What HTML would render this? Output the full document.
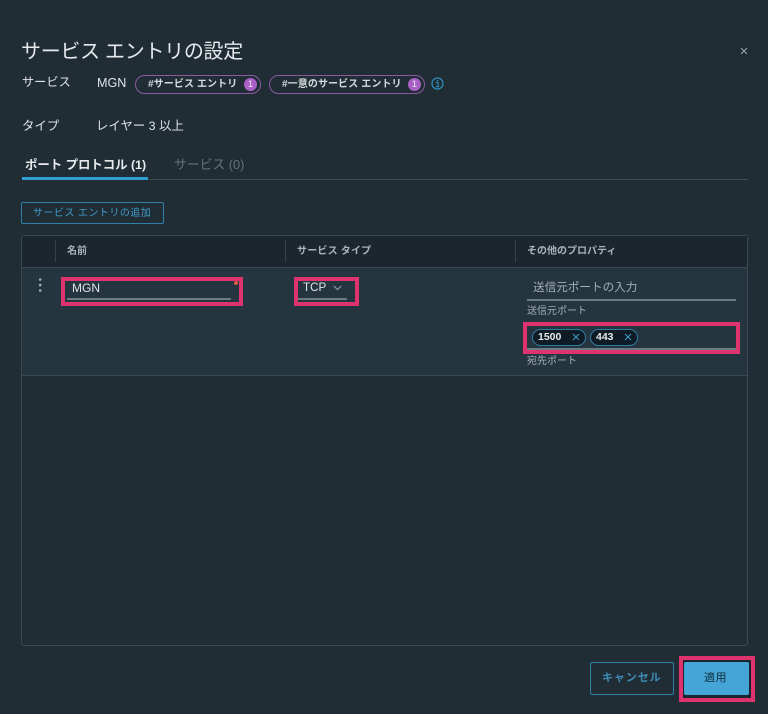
<!DOCTYPE html>
<html lang="ja">
<head>
<meta charset="utf-8">
<style>
html,body{margin:0;padding:0;background:#202d35;}
body{width:768px;height:714px;position:relative;overflow:hidden;font-family:"Liberation Sans","Noto Sans CJK JP",sans-serif;color:#dfe4e7;}
.a{position:absolute;white-space:nowrap;}
.t{line-height:1;}
.pill{position:absolute;top:75px;height:17px;border:1px solid #8b5aa0;border-radius:10px;box-sizing:content-box;}
.pill span.l{position:absolute;top:3px;font-size:10px;line-height:11px;font-weight:bold;color:#d5dadd;white-space:nowrap;letter-spacing:.1px;}
.pill span.n{position:absolute;top:2px;width:13px;height:13px;border-radius:50%;background:#a860c5;color:#f1e8f5;font-size:9px;line-height:13px;text-align:center;}
.sep{position:absolute;width:1px;background:#36444d;top:240px;height:22px;}
.pink{position:absolute;border:4px solid #df3370;box-sizing:border-box;}
.chip{position:absolute;top:329px;height:15px;border:1px solid #2f7ba3;border-radius:9px;background:#101c25;font-size:10.5px;font-weight:bold;line-height:14px;color:#e6eaec;}
</style>
</head>
<body>
<div class="a t" style="left:21px;top:42px;font-size:20px;letter-spacing:-.3px;color:#e6eaec;">サービス エントリの設定</div>
<svg class="a" style="left:740px;top:47px" width="8" height="8" viewBox="0 0 8 8"><path d="M1 1L7 7M7 1L1 7" stroke="#93a1a9" stroke-width="1.1" fill="none"/></svg>

<div class="a t" style="left:22px;top:76px;font-size:12.2px;">サービス</div>
<div class="a t" style="left:97px;top:77px;font-size:12.6px;">MGN</div>
<div class="pill" style="left:135px;width:124px;"><span class="l" style="left:12px;">#サービス エントリ</span><span class="n" style="left:108px;">1</span></div>
<div class="pill" style="left:269px;width:154px;"><span class="l" style="left:12px;">#一意のサービス エントリ</span><span class="n" style="left:138px;">1</span></div>
<svg class="a" style="left:431px;top:77px" width="13" height="13" viewBox="0 0 13 13"><circle cx="6.5" cy="6.5" r="5.5" stroke="#2d8fbd" stroke-width="1.2" fill="none"/><path d="M5 5.6H7V9.6M4.8 9.7H8.2" stroke="#2d8fbd" stroke-width="1.1" fill="none"/><rect x="5.8" y="3" width="1.4" height="1.4" fill="#2d8fbd"/></svg>

<div class="a t" style="left:22px;top:120px;font-size:12.4px;">タイプ</div>
<div class="a t" style="left:96px;top:120px;font-size:12.4px;">レイヤー 3 以上</div>

<div class="a t" style="left:25px;top:159px;font-size:12.4px;font-weight:bold;color:#e6eaec;">ポート プロトコル (1)</div>
<div class="a t" style="left:174px;top:159px;font-size:12.8px;color:#64727b;">サービス (0)</div>
<div class="a" style="left:22px;top:179px;width:726px;height:1px;background:#3d4b54;"></div>
<div class="a" style="left:22px;top:177px;width:126px;height:3px;background:#2f9fd3;"></div>

<div class="a" style="left:21px;top:202px;width:141px;height:20px;border:1px solid #2f7fa8;border-radius:2px;"></div>
<div class="a t" style="left:33px;top:209px;font-size:10px;color:#3f9ccb;letter-spacing:.45px;">サービス エントリの追加</div>

<div class="a" style="left:21px;top:235px;width:725px;height:409px;border:1px solid #3a4850;border-radius:3px;"></div>
<div class="a" style="left:22px;top:236px;width:725px;height:31px;background:#1b262e;"></div>
<div class="a" style="left:22px;top:267px;width:725px;height:109px;background:#25353f;border-top:1px solid #3a4850;border-bottom:1px solid #3a4850;box-sizing:border-box;"></div>
<div class="sep" style="left:55px;"></div>
<div class="sep" style="left:285px;"></div>
<div class="sep" style="left:515px;"></div>
<div class="a t" style="left:67px;top:247px;font-size:10px;font-weight:bold;color:#a9b4ba;">名前</div>
<div class="a t" style="left:297px;top:247px;font-size:10px;font-weight:bold;color:#a9b4ba;letter-spacing:.2px;">サービス タイプ</div>
<div class="a t" style="left:527px;top:247px;font-size:10px;font-weight:bold;color:#a9b4ba;">その他のプロパティ</div>

<svg class="a" style="left:38px;top:277px" width="5" height="16" viewBox="0 0 5 16"><circle cx="2.2" cy="2.5" r="1.3" fill="#a6b1b8"/><circle cx="2.2" cy="8" r="1.3" fill="#a6b1b8"/><circle cx="2.2" cy="13.5" r="1.3" fill="#a6b1b8"/></svg>

<div class="a t" style="left:72px;top:282px;font-size:12px;color:#dfe4e7;">MGN</div>
<div class="a" style="left:67px;top:298px;width:164px;height:2px;background:#6d7b83;"></div>
<div class="a" style="left:234px;top:281px;width:4px;height:4px;border-radius:50%;background:#e0574a;"></div>
<div class="pink" style="left:61px;top:277px;width:182px;height:29px;"></div>

<div class="a t" style="left:303px;top:282px;font-size:11.6px;color:#dfe4e7;">TCP</div>
<svg class="a" style="left:333px;top:285px" width="9" height="6" viewBox="0 0 9 6"><path d="M.8 1L4.5 4.6L8.2 1" stroke="#9aa7ae" stroke-width="1" fill="none"/></svg>
<div class="a" style="left:298px;top:298px;width:49px;height:2px;background:#6d7b83;"></div>
<div class="pink" style="left:294px;top:277px;width:65px;height:29px;"></div>

<div class="a t" style="left:533px;top:282px;font-size:11.6px;color:#a3afb6;">送信元ポートの入力</div>
<div class="a" style="left:527px;top:299px;width:209px;height:2px;background:#6d7b83;"></div>
<div class="a t" style="left:527px;top:307px;font-size:10px;color:#a3afb6;">送信元ポート</div>
<div class="chip" style="left:532px;width:52px;"><span class="a" style="left:5px;top:0;">1500</span><svg class="a" style="left:39px;top:3px" width="8" height="8" viewBox="0 0 8 8"><path d="M1 1L7 7M7 1L1 7" stroke="#3f9ccb" stroke-width="1" fill="none"/></svg></div>
<div class="chip" style="left:590px;width:46px;"><span class="a" style="left:5px;top:0;">443</span><svg class="a" style="left:33px;top:3px" width="8" height="8" viewBox="0 0 8 8"><path d="M1 1L7 7M7 1L1 7" stroke="#3f9ccb" stroke-width="1" fill="none"/></svg></div>
<div class="a" style="left:527px;top:348px;width:209px;height:2px;background:#6d7b83;"></div>
<div class="pink" style="left:523px;top:322px;width:217px;height:32px;"></div>
<div class="a t" style="left:527px;top:357px;font-size:10px;color:#a3afb6;">宛先ポート</div>

<div class="a" style="left:590px;top:662px;width:82px;height:31px;border:1px solid #2f7fa8;border-radius:2px;"></div>
<div class="a t" style="left:602px;top:673px;font-size:11px;font-weight:bold;color:#3f8db5;letter-spacing:.9px;">キャンセル</div>
<div class="a" style="left:679px;top:656px;width:76px;height:46px;background:#df3370;"></div>
<div class="a" style="left:683px;top:660px;width:68px;height:38px;background:#1b262e;"></div>
<div class="a" style="left:684px;top:662px;width:65px;height:33px;background:#44a5d6;border-radius:2px;"></div>
<div class="a t" style="left:704px;top:673px;font-size:11px;color:#12303f;letter-spacing:.5px;">適用</div>
</body>
</html>
